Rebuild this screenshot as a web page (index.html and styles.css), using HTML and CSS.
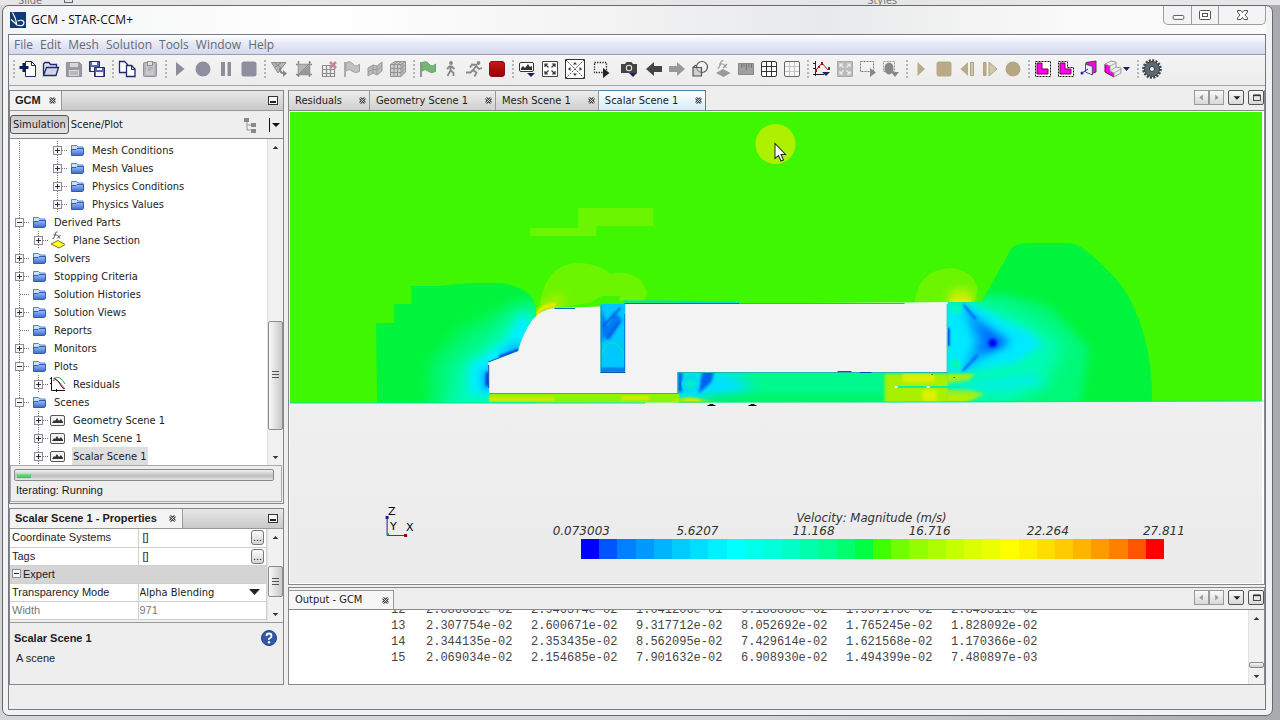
FILE: index.html
```html
<!DOCTYPE html>
<html lang="en">
<head>
<meta charset="utf-8">
<title>GCM - STAR-CCM+</title>
<link rel="stylesheet" href="styles.css">
</head>
<body>
<svg class="defs" aria-hidden="true">
  <defs>
    <linearGradient id="folderFill" x1="0" y1="0" x2="0" y2="1"><stop offset="0" stop-color="#9dbdf5"/><stop offset="1" stop-color="#3c68cf"/></linearGradient>
    <linearGradient id="stopFill" x1="0" y1="0" x2="0" y2="1"><stop offset="0" stop-color="#c81818"/><stop offset="1" stop-color="#960000"/></linearGradient>
    <symbol id="v" viewBox="0 0 19 18"><path d="M9.5 0V18" stroke="#777" stroke-dasharray="1 1"/></symbol>
    <symbol id="plus" viewBox="0 0 19 18"><path d="M9.5 0V18M14 9.5H19" stroke="#777" stroke-dasharray="1 1"/><rect x="5.500" y="5.500" width="8" height="8" fill="#f6f6f8" stroke="#8d8d93"/><path d="M7 9.500H12M9.500 7V12" stroke="#234"/></symbol>
    <symbol id="minus" viewBox="0 0 19 18"><path d="M9.500 0V18M14 9.500H19" stroke="#777" stroke-dasharray="1 1"/><rect x="5.500" y="5.500" width="8" height="8" fill="#f6f6f8" stroke="#8d8d93"/><path d="M7 9.500H12" stroke="#234"/></symbol>
    <symbol id="leaf" viewBox="0 0 19 18"><path d="M9.500 0V18M10 9.500H19" stroke="#777" stroke-dasharray="1 1"/></symbol>
    <symbol id="folder" viewBox="0 0 20 18"><path d="M4.500 13V4.500H9.500L11 6H16V13Z" fill="#cfe0ff" stroke="#4f7fd8"/><path d="M4.500 14.500V8.500H9L10 7.500H16.500V13.500L15.500 14.500Z" fill="url(#folderFill)" stroke="#3059bd"/></symbol>
    <symbol id="scene" viewBox="0 0 20 18"><rect x="2.500" y="4.500" width="14" height="10" rx="1.500" fill="#f4f4f4" stroke="#555"/><path d="M4 12L6 9 7 10 9 7 11 10 13 8 15 11V12Z" fill="#333"/></symbol>
    <symbol id="fx" viewBox="0 0 20 18"><path d="M4.500 7.500Q6 8 6.500 5.500L7.500 2Q8 .5 9.500 1M5.500 4H9M9.500 4L12 7.500M12.500 4L9 7.500" fill="none" stroke="#555"/><path d="M3 13L10 9.500 17 13.500 11 17Z" fill="#ffff20" stroke="#77731e"/></symbol>
    <symbol id="plot" viewBox="0 0 20 18"><path d="M3.500 2V15.500H17M2 3.500H4M2 8.500H4M8.500 14V17" fill="none" stroke="#111"/><path d="M5 4Q9 1 12 3T17 9" fill="none" stroke="#40a038"/><path d="M5 6Q7 3 10 6T17 14" fill="none" stroke="#c33"/><path d="M6 3Q10 5 12 9T16 14" fill="none" stroke="#326"/></symbol>
    <symbol id="close" viewBox="0 0 7 7"><path d="M1 1L6 6M6 1L1 6" stroke="#444" stroke-width="2.600"/><path d="M1 1L6 6M6 1L1 6" stroke="#eee" stroke-width=".8"/></symbol>
    <symbol id="min" viewBox="0 0 10 9"><rect x=".5" y=".5" width="9" height="8" fill="#f5f5f5" stroke="#333"/><path d="M2 6H8" stroke="#222" stroke-width="2"/></symbol>
    <symbol id="max" viewBox="0 0 15 15"><rect x="4" y="5" width="8" height="6" fill="none" stroke="#333"/><path d="M4 5H12" stroke="#333" stroke-width="2"/></symbol>
    <symbol id="left" viewBox="0 0 15 15"><path d="M9 4V11L5 7.500Z" fill="#999"/></symbol>
    <symbol id="right" viewBox="0 0 15 15"><path d="M6 4V11L10 7.500Z" fill="#999"/></symbol>
    <symbol id="down" viewBox="0 0 15 15"><path d="M4 6H12L8 10Z" fill="#222"/></symbol>
    <symbol id="sup" viewBox="0 0 16 16"><path d="M5 10H11L8 7Z" fill="#333"/></symbol>
    <symbol id="sdown" viewBox="0 0 16 16"><path d="M5 7H11L8 10Z" fill="#333"/></symbol>
  </defs>
</svg>

<div class="behind" aria-hidden="true"><span class="behind-slide">Slide</span><i class="behind-box"></i><span class="behind-styles">Styles</span></div>

<div class="window">
  <header class="titlebar">
    <svg class="app-icon" viewBox="0 0 16 16"><rect width="16" height="16" fill="#103b70"/><path d="M2.500 .5Q6 6 7 13.500M1 7.500Q4 10 7 13 14 15 14 10.500 13 7 7.500 9" fill="none" stroke="#fff" stroke-width="1.200"/></svg>
    <h1>GCM - STAR-CCM+</h1>
    <div class="caption">
      <button aria-label="Minimize"><svg width="27" height="18" viewBox="0 0 28 18"><rect x="9.500" y="9.500" width="11" height="4" rx="1" fill="#fff" stroke="#555"/></svg></button>
      <button aria-label="Maximize"><svg width="26" height="18" viewBox="0 0 26 18"><rect x="7.500" y="4.500" width="11" height="9" rx="1" fill="#fff" stroke="#555"/><rect x="10.500" y="7.500" width="5" height="3" fill="#fff" stroke="#555"/></svg></button>
      <button aria-label="Close"><svg width="46" height="18" viewBox="0 0 46 18"><path d="M18.500 4.500H22L23.500 6.500 25 4.500H28.500V6L26 9 28.500 12V13.500H25L23.500 11.500 22 13.500H18.500V12L21 9 18.500 6Z" fill="#fff" stroke="#555"/></svg></button>
    </div>
  </header>

  <div class="client">
    <nav class="menubar"><button>File</button><button>Edit</button><button>Mesh</button><button>Solution</button><button>Tools</button><button>Window</button><button>Help</button></nav>

    <div class="toolbar" role="toolbar">
      <i class="sep"></i>
      <button aria-label="New"><svg viewBox="0 0 20 20"><path d="M7.500 2.500H13.500L17.500 6.500V17.500H7.500Z" fill="#fff" stroke="#1d2a6b"/><path d="M13.500 2.500V6.500H17.500" fill="none" stroke="#1d2a6b"/><path d="M1.500 8.500H10.500M6 4V13" stroke="#101c55" stroke-width="3"/></svg></button>
      <button aria-label="Open"><svg viewBox="0 0 20 20"><path d="M2.500 15.500V5L4 3.500H8L9.500 5.500H15.500V8" fill="#d8dff2" stroke="#1d2a6b" stroke-width="1.300"/><path d="M2.500 16.500L5.500 8.500H17.500L15 16.500Z" fill="#cfd5e6" stroke="#1d2a6b" stroke-width="1.300"/></svg></button>
      <button aria-label="Save"><svg viewBox="0 0 20 20"><path d="M2.500 3.500H15.500L17.500 5.500V17.500H2.500Z" fill="#9b9ba1" stroke="#909097"/><path d="M6 4H14V8H6ZM5 11H15V17H5Z" fill="#d8d8dc"/><path d="M6 13H14M6 15H14" stroke="#999"/></svg></button>
      <button aria-label="Save all"><svg viewBox="0 0 20 20"><path d="M2.500 2.500H12.500V12.500H2.500Z" fill="#5967a4" stroke="#1d2a6b"/><path d="M5 3H10V6H5ZM4 8H11V12H4Z" fill="#f5f6fb"/><path d="M7.500 8.500H17.500V17.500H7.500Z" fill="#5967a4" stroke="#1d2a6b"/><path d="M10 9H15V11H10ZM9 13H16V17H9Z" fill="#f5f6fb"/></svg></button>
      <i class="sep"></i>
      <button aria-label="Copy"><svg viewBox="0 0 20 20"><path d="M2.500 2.500H7.500L10.500 5.500V13.500H2.500Z" fill="#fff" stroke="#1d2a6b" stroke-width="1.300"/><path d="M9.500 6.500H14.500L18 10V17.500H9.500Z" fill="#fff" stroke="#1d2a6b" stroke-width="1.300"/><path d="M14.500 6.500V10.500H18" fill="none" stroke="#1d2a6b"/></svg></button>
      <button aria-label="Paste"><svg viewBox="0 0 20 20"><rect x="3.500" y="3.500" width="13" height="14" rx="1" fill="#b5b5b8" stroke="#919194"/><path d="M6 5H14V16H6Z" fill="#c9c9cc"/><rect x="7.500" y="2.500" width="5" height="4" fill="#ddd" stroke="#919194"/><path d="M8 9H13M8 11H11" stroke="#999"/></svg></button>
      <i class="sep"></i>
      <button aria-label="Play"><svg viewBox="0 0 20 20"><path d="M6 3L14.500 10 6 17Z" fill="#8c8c9c"/></svg></button>
      <button aria-label="Record"><svg viewBox="0 0 20 20"><circle cx="10" cy="10" r="7.500" fill="#8e8e9f"/></svg></button>
      <button aria-label="Pause"><svg viewBox="0 0 20 20"><path d="M5 3H9V17H5ZM11.500 3H15V17H11.500Z" fill="#8e8e98"/></svg></button>
      <button aria-label="Stop macro"><svg viewBox="0 0 20 20"><rect x="2.500" y="2.500" width="15" height="15" rx="2.500" fill="#8e8e9f"/></svg></button>
      <i class="sep"></i>
      <button aria-label="Initialize"><svg viewBox="0 0 20 20"><path d="M2.500 3.500H17L9 14Z" fill="#b5b5b5" stroke="#8c8c8c"/><path d="M6 8L12 4M6 4L12 9" stroke="#888"/><path d="M11 9Q11 14 14 14" stroke="#888" stroke-width="2" fill="none"/><path d="M14 11L18 14.500 14 18Z" fill="#888"/></svg></button>
      <button class="wide" aria-label="Surface mesh"><svg viewBox="0 0 20 20"><path d="M2 5.500H18M2 15.500H18M4.500 2V18M15.500 2V18" stroke="#8b8b8b" stroke-width="1.500"/><path d="M4.500 15.500L15.500 5.500V15.500Z" fill="#999"/><path d="M4.500 5.500H15.500L4.500 15.500Z" fill="#b4b4b4"/><path d="M3 17L17 3" stroke="#888"/></svg></button>
      <button aria-label="Clear mesh"><svg viewBox="0 0 20 20"><path d="M3.500 6.500H15.500V17.500H3.500ZM7.500 6.500V17.500M11.500 6.500V17.500M3.500 10.500H15.500M3.500 14.500H15.500" fill="none" stroke="#8d8d8d" stroke-width="1.200"/><path d="M11 3L17 9M17 3L11 9" stroke="#c08b91" stroke-width="2.500"/></svg></button>
      <button aria-label="Surface"><svg viewBox="0 0 20 20"><path d="M3 3V18" stroke="#949494" stroke-width="1.500"/><path d="M4 4Q8 1 11 5T17.500 5V12.500Q13 15 10 12T4 12Z" fill="#c1c1c1" stroke="#a0a0a0"/></svg></button>
      <button aria-label="Volume surface"><svg viewBox="0 0 20 20"><path d="M3 9L8 6 12 7 17 3V12L12 16 8 14 3 17Z" fill="#bbb" stroke="#999"/><path d="M8 6V14M12 7V16M3 13L8 10 12 11 17 7" stroke="#999" fill="none"/></svg></button>
      <button aria-label="Volume mesh"><svg viewBox="0 0 20 20"><path d="M2.500 5.500L7 2.500H17.500V13L13 17.500H2.500Z" fill="#ccc" stroke="#929292"/><path d="M2.500 5.500H13V17.500M13 5.500L17.500 2.500M6 5V17M9.500 5V17M2.500 9.500H13L17 6M2.500 13.500H13L17 9.500M15 4V15M6 5L10 2.500M9.500 5L14 2.500" stroke="#929292" fill="none"/></svg></button>
      <i class="sep"></i>
      <button aria-label="Start"><svg viewBox="0 0 20 20"><path d="M3 3V18" stroke="#777" stroke-width="1.500"/><path d="M4 4Q8 1 11 5T17.500 5V12.500Q13 15 10 12T4 12Z" fill="#74b874" stroke="#67a367"/></svg></button>
      <button aria-label="Step"><svg viewBox="0 0 20 20"><circle cx="10" cy="4" r="1.900" fill="#888"/><path d="M9.500 6.500V11.500L6.500 17M9.500 11L12.500 14V17M9 7L6 10M10 7L13.500 10" fill="none" stroke="#888" stroke-width="1.800"/></svg></button>
      <button aria-label="Run"><svg viewBox="0 0 20 20"><circle cx="14.500" cy="4" r="1.900" fill="#888"/><path d="M13 6L9 11 12.500 13.500 10.500 17.500M9 11L6.500 13.500H2M13 6L8 5.500 6 8.500M12.500 7.500L15 10 18 9" fill="none" stroke="#888" stroke-width="1.800"/></svg></button>
      <button aria-label="Stop"><svg viewBox="0 0 20 20"><rect x="2.500" y="2.500" width="15" height="15" rx="2.500" fill="url(#stopFill)" stroke="#8c1111"/></svg></button>
      <i class="sep"></i>
      <button aria-label="Create scene"><svg viewBox="0 0 20 20"><rect x="2.500" y="3.500" width="14" height="9" rx="1.500" fill="#fff" stroke="#333"/><path d="M4 11V9L6 7 8 9 11 5 13 8 15 7V11Z" fill="#333"/><path d="M10 14H18L14 18Z" fill="#17255f"/></svg></button>
      <button aria-label="Reset view"><svg viewBox="0 0 20 20"><path d="M2.500 2.500H17.500V17.500H2.500Z" fill="#fff" stroke="#444"/><path d="M5 8V5H8M12 5H15V8M15 12V15H12M8 15H5V12M5 5L8.500 8.500M15 5L11.500 8.500M5 15L8.500 11.500M15 15L11.500 11.500" fill="none" stroke="#333" stroke-width="1.200"/></svg></button>
      <button class="wide" aria-label="View directions"><svg viewBox="0 0 20 20"><path d="M.5 .5H19.500V19.500H.5Z" fill="#fff" stroke="#333"/><path d="M1 1L19 19M19 1L1 19" stroke="#555" stroke-dasharray="2 1"/><path d="M10 3L12 5.500H8ZM10 17L12 14.500H8ZM3 10L5.500 8V12ZM17 10L14.500 8V12Z" fill="#333"/></svg></button>
      <button class="wide" aria-label="Select"><svg viewBox="0 0 20 20"><path d="M2.500 3.500H14.500V13.500H2.500Z" fill="none" stroke="#222" stroke-width="1.300" stroke-dasharray="1.300 1.300"/><path d="M11 9L17.500 14 11 19Z" fill="#222"/></svg></button>
      <button class="wide" aria-label="Snapshot"><svg viewBox="0 0 20 20"><path d="M2 5H6L7.500 3H12.500L14 5H18V14H2Z" fill="#444"/><circle cx="10" cy="9" r="3.200" fill="#eee"/><circle cx="10" cy="9" r="2.200" fill="#444"/><path d="M10 14H18L14 18Z" fill="#17255f"/></svg></button>
      <button aria-label="Back"><svg viewBox="0 0 20 20"><path d="M2 10L10 3V7H18V13H10V17Z" fill="#444"/></svg></button>
      <button aria-label="Forward"><svg viewBox="0 0 20 20"><path d="M18 10L10 3V7H2V13H10V17Z" fill="#999"/></svg></button>
      <button aria-label="Parts"><svg viewBox="0 0 20 20"><circle cx="12" cy="8" r="5.500" fill="none" stroke="#555" stroke-width="1.200"/><path d="M3 8.500H11.500V17H3ZM3 8.500L6 6" fill="#bbb" fill-opacity=".6" stroke="#555" stroke-width="1.200"/></svg></button>
      <button aria-label="Function"><svg viewBox="0 0 20 20"><path d="M4.500 9Q6 9.500 7 6L8 3Q9 1 10.500 2M6 5H10M10.500 5L13.500 9M14 5L10 9" fill="none" stroke="#999" stroke-width="1.200"/><path d="M3 14L10 10 17.500 14 10.500 18Z" fill="#999"/></svg></button>
      <button aria-label="Measure"><svg viewBox="0 0 20 20"><path d="M2.500 4.500H17.500V15.500H2.500Z" fill="#a0a0a0" stroke="#888"/><path d="M5.500 5V9M8 5V8M10.500 5V11M13 5V8M15.500 5V9" stroke="#777"/></svg></button>
      <button aria-label="Mesh display"><svg viewBox="0 0 20 20"><rect x="2.500" y="2.500" width="15" height="15" rx="1.500" fill="#fff" stroke="#333"/><path d="M7.500 2V18M12.500 2V18M2 7.500H18M2 12.500H18" stroke="#333"/></svg></button>
      <button aria-label="Hide mesh"><svg viewBox="0 0 20 20"><rect x="2.500" y="2.500" width="15" height="15" rx="1.500" fill="#f8f8f8" stroke="#666"/><path d="M7.500 3V17M12.500 3V17M3 7.500H17M3 12.500H17" stroke="#c5c5c5"/></svg></button>
      <i class="sep"></i>
      <button aria-label="Create plot"><svg viewBox="0 0 20 20"><path d="M3.500 2V17M1 15.500H12M1 4.500H4M1 9.500H4" stroke="#222"/><path d="M4 11L10 4 16 11 18 9" stroke="#a22" fill="none"/><path d="M3 10H5V13H3ZM9 3H11V6H9ZM6 7H8V9H6ZM16 8H18V11H16Z" fill="#a11"/><path d="M10 13H18L14 17Z" fill="#17255f"/></svg></button>
      <button aria-label="Fit plot"><svg viewBox="0 0 20 20"><path d="M2.500 2.500H17.500V17.500H2.500Z" fill="#bbb" stroke="#aaa"/><path d="M5 8V5H8M12 5H15V8M15 12V15H12M8 15H5V12M5 5L8.500 8.500M15 5L11.500 8.500M5 15L8.500 11.500M15 15L11.500 11.500" fill="none" stroke="#eee" stroke-width="1.200"/></svg></button>
      <button aria-label="Zoom plot"><svg viewBox="0 0 20 20"><path d="M2.500 2.500H15.500V12.500H2.500Z" fill="none" stroke="#777" stroke-dasharray="2 1"/><path d="M12 9L18 13.500 12 18Z" fill="#888"/></svg></button>
      <button aria-label="Plot data"><svg viewBox="0 0 20 20"><path d="M2.500 2.500H13.500V12.500H2.500Z" fill="none" stroke="#999" stroke-dasharray="2 1"/><ellipse cx="8" cy="9.500" rx="4.500" ry="6" fill="#888"/><path d="M10 13H18L14 18Z" fill="#888"/></svg></button>
      <i class="sep"></i>
      <button aria-label="Play history"><svg viewBox="0 0 20 20"><path d="M6.500 3L14 10 6.500 17Z" fill="#b9ab87"/></svg></button>
      <button aria-label="Stop history"><svg viewBox="0 0 20 20"><rect x="2.500" y="2.500" width="15" height="15" rx="2.500" fill="#b9ab87"/></svg></button>
      <button aria-label="Previous"><svg viewBox="0 0 20 20"><path d="M11 3L3.500 10 11 17Z" fill="#b9ab87"/><path d="M13.500 3.500H16.500V16.500H13.500Z" fill="#d0c6aa" stroke="#b0a37f"/></svg></button>
      <button aria-label="Next"><svg viewBox="0 0 20 20"><path d="M9 3L17 10 9 17Z" fill="#d0c6aa" stroke="#b0a37f"/><path d="M3.500 3.500H6V16.500H3.500Z" fill="#b9ab87" stroke="#b0a37f"/></svg></button>
      <button aria-label="Record history"><svg viewBox="0 0 20 20"><circle cx="10" cy="10" r="7.500" fill="#b5a780"/></svg></button>
      <i class="sep"></i>
      <button aria-label="Section"><svg viewBox="0 0 20 20"><path d="M2.500 2.500H17.500V17.500H2.500Z" fill="#fff" stroke="#111" stroke-dasharray="2 1"/><path d="M4 4H9V10H15V15H4Z" fill="#f0e" stroke="#704"/></svg></button>
      <button aria-label="Clip"><svg viewBox="0 0 20 20"><path d="M2.500 2.500H11.500V8.500H17.500V17.500H2.500Z" fill="#fff" stroke="#111" stroke-dasharray="2 1"/><path d="M4 4H9V10H15V15H4Z" fill="#f0e" stroke="#704"/></svg></button>
      <button aria-label="Plane"><svg viewBox="0 0 20 20"><path d="M7 3.500L17 2V13L13 14.500V7L7 5.500Z" fill="#f0e" stroke="#535"/><path d="M6.500 5L13.500 7.500V16L6.500 13Z" fill="#eee" fill-opacity=".8" stroke="#557"/><path d="M3 14L9 10" stroke="#22c"/><circle cx="3" cy="14" r="1.500" fill="#22c"/></svg></button>
      <button class="drop" aria-label="Threshold"><svg class="icon-wide" viewBox="0 0 28 20"><path d="M2 5L7 7V12L11 14V18L2 13Z" fill="#f0e" stroke="#704"/><path d="M2 5L8 2 13 3V8L18 9V14L11 18V14L7 12V7Z" fill="#eee" stroke="#999"/><path d="M7 7L13 4M11 14L18 10M7 12L13 8" stroke="#aaa"/><path d="M20 8H27L23.500 12Z" fill="#17255f"/></svg></button>
      <i class="sep"></i>
      <button aria-label="Settings"><svg viewBox="0 0 20 20"><circle cx="10" cy="10" r="8.500" fill="none" stroke="#3d444b" stroke-width="2.600" stroke-dasharray="2 1.330"/><circle cx="10" cy="10" r="7.500" fill="#5d6973" stroke="#3d444b"/><circle cx="10" cy="10" r="2.500" fill="#f4f4f4" stroke="#333"/></svg></button>
    </div>

    <main class="workspace">
      <aside class="side">
        <section class="panel explorer">
          <div class="panel-head"><div class="panel-title">GCM <button aria-label="Close GCM"><svg class="x"><use href="#close"/></svg></button></div><button class="mini" aria-label="Minimize"><svg width="10" height="9"><use href="#min"/></svg></button></div>
          <div class="modes">
            <button class="mode on">Simulation</button><button class="mode">Scene/Plot</button>
            <svg class="tree-icon" viewBox="0 0 24 16" width="24" height="16"><path d="M4 4V13H11M4 8H11" fill="none" stroke="#999"/><path d="M1 1H6V5H1ZM8 6H13V10H8ZM8 12H13V16H8Z" fill="#888"/></svg>
            <button class="filter" aria-label="Filter"><svg width="14" height="16" viewBox="0 0 14 16"><path d="M2.500 1V15" stroke="#111"/><path d="M5 6H13L9 10Z" fill="#111"/></svg></button>
          </div>
          <div class="scroller">
            <ul class="tree">
              <li><svg class="g"><use href="#v"/></svg><i class="g"></i><svg class="g"><use href="#plus"/></svg><svg class="ic"><use href="#folder"/></svg><span>Mesh Conditions</span></li>
              <li><svg class="g"><use href="#v"/></svg><i class="g"></i><svg class="g"><use href="#plus"/></svg><svg class="ic"><use href="#folder"/></svg><span>Mesh Values</span></li>
              <li><svg class="g"><use href="#v"/></svg><i class="g"></i><svg class="g"><use href="#plus"/></svg><svg class="ic"><use href="#folder"/></svg><span>Physics Conditions</span></li>
              <li><svg class="g"><use href="#v"/></svg><i class="g"></i><svg class="g"><use href="#plus"/></svg><svg class="ic"><use href="#folder"/></svg><span>Physics Values</span></li>
              <li><svg class="g"><use href="#minus"/></svg><svg class="ic"><use href="#folder"/></svg><span>Derived Parts</span></li>
              <li><svg class="g"><use href="#v"/></svg><svg class="g"><use href="#plus"/></svg><svg class="ic"><use href="#fx"/></svg><span>Plane Section</span></li>
              <li><svg class="g"><use href="#plus"/></svg><svg class="ic"><use href="#folder"/></svg><span>Solvers</span></li>
              <li><svg class="g"><use href="#plus"/></svg><svg class="ic"><use href="#folder"/></svg><span>Stopping Criteria</span></li>
              <li><svg class="g"><use href="#leaf"/></svg><svg class="ic"><use href="#folder"/></svg><span>Solution Histories</span></li>
              <li><svg class="g"><use href="#plus"/></svg><svg class="ic"><use href="#folder"/></svg><span>Solution Views</span></li>
              <li><svg class="g"><use href="#leaf"/></svg><svg class="ic"><use href="#folder"/></svg><span>Reports</span></li>
              <li><svg class="g"><use href="#plus"/></svg><svg class="ic"><use href="#folder"/></svg><span>Monitors</span></li>
              <li><svg class="g"><use href="#minus"/></svg><svg class="ic"><use href="#folder"/></svg><span>Plots</span></li>
              <li><svg class="g"><use href="#v"/></svg><svg class="g"><use href="#plus"/></svg><svg class="ic"><use href="#plot"/></svg><span>Residuals</span></li>
              <li><svg class="g"><use href="#minus"/></svg><svg class="ic"><use href="#folder"/></svg><span>Scenes</span></li>
              <li><svg class="g"><use href="#v"/></svg><svg class="g"><use href="#plus"/></svg><svg class="ic"><use href="#scene"/></svg><span>Geometry Scene 1</span></li>
              <li><svg class="g"><use href="#v"/></svg><svg class="g"><use href="#plus"/></svg><svg class="ic"><use href="#scene"/></svg><span>Mesh Scene 1</span></li>
              <li><svg class="g"><use href="#v"/></svg><svg class="g"><use href="#plus"/></svg><svg class="ic"><use href="#scene"/></svg><span class="selected">Scalar Scene 1</span></li>
            </ul>
            <div class="bar"><svg class="arrow"><use href="#sup"/></svg><i class="gap-tree"></i><b class="thumb thumb-tree"></b><i class="gap-end"></i><svg class="arrow"><use href="#sdown"/></svg></div>
          </div>
          <div class="progress"><div class="track"><i></i></div><p>Iterating: Running</p></div>
        </section>

        <section class="panel props">
          <div class="panel-head"><div class="panel-title">Scalar Scene 1 - Properties <button aria-label="Close properties"><svg class="x"><use href="#close"/></svg></button></div><button class="mini" aria-label="Minimize"><svg width="10" height="9"><use href="#min"/></svg></button></div>
          <div class="scroller">
            <table class="grid">
              <tr><th>Coordinate Systems</th><td><div class="cell">[]<button class="dots" aria-label="Edit coordinate systems">...</button></div></td></tr>
              <tr><th>Tags</th><td><div class="cell">[]<button class="dots" aria-label="Edit tags">...</button></div></td></tr>
              <tr class="group"><th colspan="2"><svg width="9" height="9" viewBox="0 0 9 9"><rect x=".5" y=".5" width="8" height="8" fill="#f6f6f8" stroke="#8d8d93"/><path d="M2 4.500H7" stroke="#234"/></svg>Expert</th></tr>
              <tr><th><label for="mode">Transparency Mode</label></th><td><div class="pick"><select id="mode"><option>Alpha Blending</option></select><svg width="11" height="6" viewBox="0 0 11 6"><path d="M0 0H11L5.500 6Z" fill="#222"/></svg></div></td></tr>
              <tr class="off"><th>Width</th><td>971</td></tr>
            </table>
            <div class="bar"><svg class="arrow"><use href="#sup"/></svg><i class="gap-props"></i><b class="thumb thumb-props"></b><i class="gap-end-props"></i><svg class="arrow"><use href="#sdown"/></svg></div>
          </div>
          <div class="about"><h2>Scalar Scene 1</h2><button aria-label="Help"><svg width="16" height="16" viewBox="0 0 16 16"><circle cx="8" cy="8" r="7.500" fill="#3258a8" stroke="#234180"/><path d="M5.500 6Q5.500 3.500 8 3.500T10.500 6Q10.500 7.300 9 8T8 9.800" fill="none" stroke="#fff" stroke-width="1.800"/><circle cx="8" cy="12.300" r="1.200" fill="#fff"/></svg></button><p>A scene</p></div>
        </section>
      </aside>

      <div class="center">
        <section class="views">
          <div class="tabs">
            <button class="tab">Residuals<svg class="x"><use href="#close"/></svg></button>
            <button class="tab">Geometry Scene 1<svg class="x"><use href="#close"/></svg></button>
            <button class="tab">Mesh Scene 1<svg class="x"><use href="#close"/></svg></button>
            <button class="tab active">Scalar Scene 1<svg class="x"><use href="#close"/></svg></button>
            <div class="tab-tools"><button aria-label="Previous tab"><svg><use href="#left"/></svg></button><button aria-label="Next tab"><svg><use href="#right"/></svg></button><button class="strong" aria-label="Tab list"><svg><use href="#down"/></svg></button><button class="strong" aria-label="Maximize"><svg><use href="#max"/></svg></button></div>
          </div>
          <div class="canvas">
            <svg class="scene" viewBox="291 112 971 471" preserveAspectRatio="none" role="img" aria-label="Velocity magnitude around the truck">
              <defs>
                <linearGradient id="bg" x1="0" y1="0" x2="0" y2="1"><stop offset="0" stop-color="#f6f6f6"/><stop offset="1" stop-color="#ebebeb"/></linearGradient>
                <filter id="b1" x="-50%" y="-50%" width="200%" height="200%" filterUnits="objectBoundingBox"><feGaussianBlur stdDeviation="1.500"/></filter>
                <filter id="line" filterUnits="userSpaceOnUse" x="291" y="112" width="971" height="471"><feGaussianBlur stdDeviation="1.200"/></filter>
                <filter id="b4" x="-50%" y="-50%" width="200%" height="200%"><feGaussianBlur stdDeviation="4"/></filter>
                <filter id="b8" x="-50%" y="-50%" width="200%" height="200%"><feGaussianBlur stdDeviation="8"/></filter>
                <clipPath id="flow"><path d="M291 112H1262V401L925 402 291 403Z"/></clipPath>
                <clipPath id="front"><path d="M378 403L377 323H395V304H412V286H440L470 283H500Q525 286 533 298L537 310V403Z"/></clipPath>
                <clipPath id="wake"><path d="M940 302H982L1012 248Q1018 243 1030 243H1070Q1082 245 1097 260Q1125 284 1135 310Q1153 350 1152 403H880V372H940Z"/></clipPath>
                <clipPath id="notch"><path d="M601 304H626V372H601Z"/></clipPath>
                <clipPath id="under"><path d="M678 372H948V402H678Z"/></clipPath>
              </defs>
              <rect x="291" y="112" width="971" height="471" fill="url(#bg)"/>
              <g clip-path="url(#flow)">
                <rect x="291" y="112" width="971" height="292" fill="#3ff700"/>
                <path d="M579 208H654V226H597V236H531V228H579Z" fill="#6cf500"/>
                <path d="M541 310Q540 290 552 275Q562 263 580 263Q600 264 611 274Q630 270 641 280L648 292 645 301H620V296H603L590 303Z" fill="#6cf500"/>
                <path d="M540 312Q546 290 568 297L560 308Z" fill="#a4f000" filter="url(#b4)"/>
                <path d="M535 320Q540 305 556 305" fill="none" stroke="#f0e800" stroke-width="4" filter="url(#line)"/>
                <path d="M915 303Q919 270 950 268Q975 270 978 290L974 303Z" fill="#6cf500"/>
                <ellipse cx="961" cy="298" rx="13" ry="9" fill="#c8f000" filter="url(#b4)"/>
                <path d="M950 301H971" stroke="#ffe400" stroke-width="3" filter="url(#line)"/>
                <g clip-path="url(#front)">
                  <rect x="370" y="275" width="180" height="130" fill="#00f43c"/>
                  <path d="M432 415V362L465 330 515 305 545 300V410Z" fill="#00f878" filter="url(#b8)"/>
                  <path d="M445 415L460 362 485 345 515 312 540 306V410Z" fill="#00fbb5" filter="url(#b8)"/>
                  <path d="M470 395V365L507 341 523 312 535 330 510 362V395Z" fill="#00f0ff" filter="url(#b4)"/>
                  <path d="M484 370V390H492V370ZM498 357L521 350 520 342Z" fill="#0090ff" filter="url(#b4)"/>
                  <path d="M488 372V386M500 357L520 350" stroke="#0030dd" stroke-width="3" filter="url(#line)"/>
                </g>
                <g clip-path="url(#wake)">
                  <rect x="870" y="235" width="290" height="170" fill="#00f43c"/>
                  <path d="M940 300L1005 294 1050 307 1089 348 1080 405H940Z" fill="#00f878" filter="url(#b4)"/>
                  <path d="M945 304H975Q1020 305 1065 345L1045 385 1010 405H945Z" fill="#00fbb5" filter="url(#b8)"/>
                  <path d="M945 304H972L1030 333 1043 345 1015 363 960 373H945Z" fill="#00e8ff" filter="url(#b4)"/>
                  <path d="M962 304L984 322 1012 342 988 354 963 371 976 342Z" fill="#00a0ff" filter="url(#b4)"/>
                  <path d="M975 322L998 338 1007 343 990 351 978 349 988 342Z" fill="#0058ff" filter="url(#b4)"/>
                  <circle cx="993" cy="343" r="4" fill="#0000ee" filter="url(#b1)"/>
                  <path d="M964 305L976 319M963 371L978 355" stroke="#0058ff" stroke-width="2" filter="url(#line)"/>
                  <path d="M948 328V346" stroke="#0040ee" stroke-width="4" filter="url(#line)"/>
                  <ellipse cx="957" cy="309" rx="5" ry="5" fill="#00fbb5" filter="url(#b1)"/>
                  <ellipse cx="956" cy="364" rx="5" ry="5" fill="#00fbb5" filter="url(#b1)"/>
                  <path d="M940 374H975L969 381 948 384H930ZM930 389H970L985 394 965 403H930Z" fill="#b4f000" filter="url(#b1)"/>
                  <path d="M930 385L975 382 1030 374 1050 384 1000 391 930 388Z" fill="#00f0e0" filter="url(#b4)"/>
                </g>
                <g clip-path="url(#notch)">
                  <rect x="601" y="304" width="25" height="68" fill="#00c8ff"/>
                  <path d="M602 309L609 328 602 344ZM615 312L623 320 610 340 604 335Z" fill="#0078f4" filter="url(#b1)"/>
                  <path d="M603 327L621 308M607 339L620 322M602 369H626" stroke="#0058df" stroke-width="2" filter="url(#line)"/>
                  <path d="M603 354Q606 341 615 343 625 347 624 359" fill="none" stroke="#00e8b0"/>
                  <path d="M601.500 306V371H625.500V314" fill="none" stroke="#0068cc"/>
                </g>
                <g clip-path="url(#under)">
                  <rect x="678" y="372" width="270" height="31" fill="#00f88c"/>
                  <path d="M672 370H730L755 387 720 405H672Z" fill="#00e0ff" filter="url(#b8)"/>
                  <path d="M703 370H715L712 382 699 394ZM678 372H683V392H678Z" fill="#0060f0" filter="url(#b1)"/>
                  <circle cx="691" cy="384" r="9" fill="#00d8f4"/>
                  <circle cx="691" cy="384" r="5" fill="#00edc8" filter="url(#b1)"/>
                  <path d="M690 404L715 395H885V405Z" fill="#00f45c" filter="url(#b4)"/>
                  <path d="M885 374H950V404H885Z" fill="#a8f000" filter="url(#b1)"/>
                  <path d="M903 374H935V382H903ZM923 390H937V401H923Z" fill="#e0f000" filter="url(#b1)"/>
                </g>
                <path d="M895 387H960" stroke="#00f0b0" stroke-width="2"/><path d="M895 387H898M927 387H930" stroke="#fff" stroke-width="2"/>
                <path d="M490 398H680" stroke="#8cf400" stroke-width="8"/>
                <path d="M672 400L690 397 718 403H672Z" fill="#a8f000" filter="url(#b1)"/>
                <path d="M490 399H555M622 398H650M684 401H700" stroke="#d8e800" stroke-width="4" filter="url(#line)"/>
                <path d="M624 301.500H665L740 303" stroke="#00dcd0" stroke-width="2" fill="none"/>
              </g>
              <path d="M489 362L519 350.500Q523 335 533 320Q543 309 555 308L601 306.500V372H626V304L740 303.500 905 302.500 948 302V372H678V394H490Z" fill="#f3f3f4"/>
              <path d="M489 362L519 350.500M625 303.500H740M555 308.500H576" fill="none" stroke="#0070c0"/>
              <path d="M740 303.500H905M678.500 372V394M490 393.500H678M678 372.500H948M947.500 304V372" fill="none" stroke="#20b7b0"/>
              <path d="M601 372.500H626M838 371.500H852M860 372.500H872M489.500 365V388" stroke="#104fb0"/>
              <path d="M291 403H646M680 402H940L1262 401" stroke="#00e6a0" fill="none"/>
              <path d="M708 405.500H716M710 404.500H714M749 405.500H757M751 404.500H755" stroke="#111"/>
              <path d="M932 374.500H933M954 377.500H955" stroke="#123"/>
              <path d="M388 535.500V517" stroke="#1919a0"/><path d="M388 535.500H407" stroke="#b01818"/><path d="M386.500 516H389.500V519H386.500Z" fill="#1919a0"/><path d="M405 534H408V537H405Z" fill="#900"/><path d="M388 533H390V535H388Z" fill="#0c0"/>
              <g class="axis"><text x="389" y="515">Z</text><text x="391" y="530">Y</text><text x="407" y="531">X</text></g>
              <text class="legend-title" x="872" y="522">Velocity: Magnitude (m/s)</text>
              <g class="legend"><text x="582" y="535">0.073003</text><text x="698" y="535">5.6207</text><text x="814" y="535">11.168</text><text x="930" y="535">16.716</text><text x="1048" y="535">22.264</text><text x="1164" y="535">27.811</text></g>
              <g shape-rendering="crispEdges">
                <rect x="582" y="539" width="18" height="20" fill="#0000ff"/><rect x="600" y="539" width="18" height="20" fill="#0055ff"/><rect x="618" y="539" width="19" height="20" fill="#007fff"/><rect x="637" y="539" width="18" height="20" fill="#009aff"/><rect x="655" y="539" width="18" height="20" fill="#00b4ff"/><rect x="673" y="539" width="18" height="20" fill="#00caff"/><rect x="691" y="539" width="18" height="20" fill="#00deff"/><rect x="709" y="539" width="19" height="20" fill="#00f0ff"/><rect x="728" y="539" width="18" height="20" fill="#00ffff"/><rect x="746" y="539" width="18" height="20" fill="#00ffec"/><rect x="764" y="539" width="18" height="20" fill="#00ffda"/><rect x="782" y="539" width="18" height="20" fill="#00ffc6"/><rect x="800" y="539" width="18" height="20" fill="#00ffac"/><rect x="818" y="539" width="19" height="20" fill="#00ff92"/><rect x="837" y="539" width="18" height="20" fill="#00ff6e"/><rect x="855" y="539" width="18" height="20" fill="#00ff40"/><rect x="873" y="539" width="18" height="20" fill="#40ff00"/><rect x="891" y="539" width="18" height="20" fill="#70ff00"/><rect x="909" y="539" width="19" height="20" fill="#92ff00"/><rect x="928" y="539" width="18" height="20" fill="#acff00"/><rect x="946" y="539" width="18" height="20" fill="#c6ff00"/><rect x="964" y="539" width="18" height="20" fill="#daff00"/><rect x="982" y="539" width="18" height="20" fill="#ecff00"/><rect x="1000" y="539" width="19" height="20" fill="#ffff00"/><rect x="1019" y="539" width="18" height="20" fill="#fff000"/><rect x="1037" y="539" width="18" height="20" fill="#ffde00"/><rect x="1055" y="539" width="18" height="20" fill="#ffca00"/><rect x="1073" y="539" width="18" height="20" fill="#ffb400"/><rect x="1091" y="539" width="18" height="20" fill="#ff9a00"/><rect x="1109" y="539" width="19" height="20" fill="#ff7f00"/><rect x="1128" y="539" width="18" height="20" fill="#ff5500"/><rect x="1146" y="539" width="18" height="20" fill="#ff0000"/>
              </g>
              <circle cx="776" cy="144" r="20" fill="#aef000"/>
              <path d="M775.500 143.500V158.500L779 155.500 781.500 161 784 160 781.500 154.500H786Z" fill="#fff" stroke="#222"/>
            </svg>
          </div>
        </section>

        <section class="output">
          <div class="tabs out-tabs">
            <button class="tab plain">Output - GCM<svg class="x"><use href="#close"/></svg></button>
            <div class="tab-tools"><button aria-label="Previous tab"><svg><use href="#left"/></svg></button><button aria-label="Next tab"><svg><use href="#right"/></svg></button><button class="strong" aria-label="Tab list"><svg><use href="#down"/></svg></button><button class="strong" aria-label="Maximize"><svg><use href="#max"/></svg></button></div>
          </div>
          <div class="scroller">
            <div class="log"><table>
              <tr><td>12</td><td>2.886681e-02</td><td>2.946374e-02</td><td>1.041206e-01</td><td>9.188888e-02</td><td>1.937173e-02</td><td>2.845311e-02</td></tr>
              <tr><td>13</td><td>2.307754e-02</td><td>2.600671e-02</td><td>9.317712e-02</td><td>8.052692e-02</td><td>1.765245e-02</td><td>1.828092e-02</td></tr>
              <tr><td>14</td><td>2.344135e-02</td><td>2.353435e-02</td><td>8.562095e-02</td><td>7.429614e-02</td><td>1.621568e-02</td><td>1.170366e-02</td></tr>
              <tr><td>15</td><td>2.069034e-02</td><td>2.154685e-02</td><td>7.901632e-02</td><td>6.908930e-02</td><td>1.494399e-02</td><td>7.480897e-03</td></tr>
            </table></div>
            <div class="bar"><svg class="arrow"><use href="#sup"/></svg><i class="gap-log"></i><b class="thumb thumb-log"></b><svg class="arrow"><use href="#sdown"/></svg></div>
          </div>
        </section>
      </div>
    </main>
    <footer class="status"></footer>
  </div>
</div>
</body>
</html>
```

FILE: styles.css
```css
* { box-sizing: border-box; }

body {
  margin: 0;
  height: 100vh;
  overflow: hidden;
  display: flex;
  flex-direction: column;
  padding: 0 7px 4px 2px;
  background: linear-gradient(90deg, #d5d5d6 0 60%, #a9aaae 100%);
  font: 11px/18px "DejaVu Sans Condensed", "DejaVu Sans", sans-serif;
  color: #1c1c1c;
}

button { font: inherit; color: inherit; background: none; border: 0; padding: 0; margin: 0; display: flex; align-items: center; justify-content: center; }
ul, p, h1, h2 { margin: 0; padding: 0; }
svg { display: block; flex: none; }
.defs { position: absolute; width: 0; height: 0; }

.behind { flex: none; height: 5px; margin: 0 -7px 0 -2px; overflow: hidden; display: flex; background: #e6e6e7; color: #777; }
.behind span { line-height: 2px; }
.behind-slide { margin-left: 18px; }
.behind-box { width: 9px; height: 3px; margin-left: 22px; border: 1px solid #667; border-top: 0; }
.behind-styles { margin-left: 794px; }

.window {
  flex: 1;
  min-height: 0;
  display: flex;
  flex-direction: column;
  padding: 0 6px 5px 5px;
  border: 1px solid #666a70;
  border-radius: 7px;
  background: #f1f2f3;
}

.titlebar { flex: none; height: 28px; display: flex; align-items: center; gap: 5px; padding-left: 2px; background: linear-gradient(90deg, #f3f4f5 0, #fff 25%, #f4f4f5 45%, #e8e9ea 65%, #fafafa 85%); }
.app-icon { width: 16px; height: 16px; }
.titlebar h1 { flex: 1; font: 12px/28px "Open Sans", "Noto Sans", sans-serif; color: #111; }
.caption { align-self: flex-start; display: flex; border: 1px solid #9a9da2; border-top: 0; border-radius: 0 0 5px 5px; background: #f3f3f5; }
.caption button + button { border-left: 1px solid #9a9da2; }

.client { flex: 1; min-height: 0; display: flex; flex-direction: column; border: 1px solid #777b80; background: #eee; }
.menubar { flex: none; height: 20px; display: flex; gap: 7px; padding-left: 5px; background: linear-gradient(#fff, #e6e9f5 45%, #d4d9ee); border-bottom: 1px solid #9a9ca6; font: 12px/20px "Open Sans", "Noto Sans", sans-serif; color: #666a72; }
.toolbar { flex: none; height: 31px; display: flex; align-items: center; padding-bottom: 2px; border-bottom: 1px solid #a3a3a3; background: linear-gradient(#f4f4f4, #ececec); }
.toolbar button { flex: none; width: 23px; height: 24px; }
.toolbar .wide { width: 27px; }
.toolbar .drop { width: 33px; }
.toolbar svg { width: 20px; height: 20px; }
.toolbar .icon-wide { width: 28px; }
.sep { flex: none; width: 7px; height: 18px; background: linear-gradient(#b5b5b5, #b5b5b5) 4px 0 / 2px 2px no-repeat, linear-gradient(#b5b5b5, #b5b5b5) 4px 4px / 2px 2px no-repeat, linear-gradient(#b5b5b5, #b5b5b5) 4px 8px / 2px 2px no-repeat, linear-gradient(#b5b5b5, #b5b5b5) 4px 12px / 2px 2px no-repeat, linear-gradient(#b5b5b5, #b5b5b5) 4px 16px / 2px 2px no-repeat; }

.workspace { flex: 1; min-height: 0; display: grid; grid-template-columns: 275px minmax(0, 1fr); gap: 4px; padding: 4px 0 0; }
.side, .center { min-height: 0; display: flex; flex-direction: column; }
.side { gap: 4px; }
.panel { display: flex; flex-direction: column; border: 1px solid #85878c; min-height: 0; }
.explorer { flex: 1; }
.panel-head { flex: none; height: 20px; display: flex; align-items: stretch; border-bottom: 1px solid #999; background: linear-gradient(#e8e8e8, #c9c9c9); }
.panel-title { display: flex; align-items: center; gap: 8px; padding: 0 5px; border-right: 1px solid #999; background: #f3f3f3; font: bold 11px/19px "Liberation Sans", Arial, sans-serif; }
.props .panel-title { gap: 12px; padding-right: 6px; }
.x { width: 7px; height: 7px; }
.mini { margin: 0 5px 0 auto; }
.modes { flex: none; height: 28px; display: flex; align-items: center; border-bottom: 1px solid #7f8b98; }
.mode { height: 19px; padding: 0 2px; }
.mode.on { border: 1px solid #555; border-radius: 3px; background: linear-gradient(#c8c8c8, #e2e2e2); }
.tree-icon { margin-left: auto; }
.filter { margin-right: 2px; }

.scroller { flex: 1; min-height: 0; display: flex; }
.tree { flex: 1; min-width: 0; list-style: none; background: #fff; padding-top: 2px; overflow: hidden; }
.tree li { display: flex; height: 18px; }
.g { flex: none; width: 19px; height: 18px; }
.ic { width: 20px; height: 18px; margin-right: 4px; }
.tree span { padding: 1px 2px 0 1px; }
.selected { background: #dedede; }

.bar { flex: none; width: 16px; display: flex; flex-direction: column; background: #f1f1f1; border-left: 1px solid #e2e2e2; }
.arrow { width: 15px; height: 16px; }
.thumb { border: 1px solid #8b8b8b; border-radius: 2px; background: repeating-linear-gradient(#555 0 1px, transparent 1px 3px) 50% 50% / 7px 8px no-repeat, linear-gradient(90deg, #f8f8f8, #c8c8c8); }
.gap-tree { flex: 167; }
.thumb-tree { flex: 108; }
.gap-end { flex: 19; }
.gap-props { flex: 21; }
.thumb-props { flex: 29; }
.gap-end-props { flex: 9; }
.gap-log { flex: 1; }
.thumb-log { height: 6px; background: linear-gradient(#f8f8f8, #ccc); }

.progress { flex: none; height: 37px; margin: 0 1px 1px 0; padding: 3px 7px 0 3px; border: 1px solid #aaa; }
.track { height: 12px; padding: 4px 2px; border: 1px solid #888; border-radius: 2px; background: linear-gradient(#f0f0f0, #bdbdbd 60%, #e8e8e8); }
.track i { display: block; width: 14px; height: 4px; background: linear-gradient(#7ddc8c, #2ec94c); }
.progress p { padding-left: 2px; font: 11px/19px "Liberation Sans", Arial, sans-serif; }

.props { flex: none; height: 177px; font-family: "Liberation Sans", Arial, sans-serif; }
.grid { flex: 1; align-self: flex-start; border-collapse: collapse; table-layout: fixed; background: #fff; }
.grid th, .grid td { height: 18px; padding: 0 2px; border-bottom: 1px solid #d0d0d0; border-right: 1px solid #d0d0d0; text-align: left; font-weight: normal; line-height: 17px; }
.grid th { width: 128px; }
.grid td { padding-left: 1px; }
.grid .cell { display: flex; justify-content: space-between; padding-left: 3px; height: 17px; align-items: center; }
.grid .group th { background: #d4d4d4; }
.grid .group svg { display: inline-block; margin: 0 2px 0 0; }
.off { color: #777; }
.dots { width: 13px; height: 15px; border: 1px solid #777; border-radius: 3px; background: linear-gradient(#fafafa, #d5d5d5); }
.pick { display: flex; align-items: center; padding-right: 4px; height: 17px; }
.pick select { flex: 1; min-width: 0; appearance: none; border: 0; padding: 0; background: none; font: 11px/17px "DejaVu Sans Condensed", sans-serif; color: #1c1c1c; }
.about { flex: none; height: 62px; display: grid; grid-template-columns: 1fr auto; align-content: start; padding: 5px 6px 0 4px; row-gap: 1px; border-top: 1px solid #999; }
.about h2 { font-size: 11px; line-height: 20px; }
.about p { padding-left: 2px; }

.views { flex: 1; min-height: 0; display: flex; flex-direction: column; border: 1px solid #85878c; border-top: 0; }
.tabs { flex: none; height: 21px; display: flex; border-bottom: 1px solid #85878c; }
.tab { border: 1px solid #999; border-bottom: 0; border-left: 0; padding: 0 3px 0 6px; gap: 17px; background: linear-gradient(#ededed, #cfcfcf); }
.tab.active { border-color: #4a84a8; background: linear-gradient(#fff, #d4ecf8); }
.tab.plain { background: #f6f6f6; gap: 20px; padding-right: 4px; }
.tab-tools { margin-left: auto; display: flex; align-items: flex-start; }
.tab-tools button { border: 1px solid #999; width: 15px; height: 15px; background: linear-gradient(#fafafa, #d8d8d8); }
.tab-tools svg { width: 13px; height: 13px; }
.tab-tools .strong { margin-left: 4px; border-color: #555; border-radius: 2px; width: 16px; }
.canvas { flex: 1; min-height: 0; display: flex; padding: 1px 2px 1px 1px; background: #fff; }
.scene { flex: 1; width: 100%; height: 100%; }
.axis { font: 11px "DejaVu Sans", sans-serif; }
.legend { font: italic 12px "DejaVu Sans", sans-serif; text-anchor: middle; fill: #333; }
.legend-title { font: italic 13px "DejaVu Sans Condensed", sans-serif; text-anchor: middle; fill: #333; }

.output { flex: none; height: 98px; display: flex; flex-direction: column; margin-top: 2px; border: 1px solid #85878c; }
.out-tabs { height: 22px; padding-top: 2px; }
.log { flex: 1; min-width: 0; display: flex; align-items: flex-end; padding: 0 0 18px 102px; overflow: hidden; background: #fff; }
.log table { border-collapse: collapse; font: 12px/16px "Liberation Mono", monospace; color: #444; }
.log td { padding: 0; width: 105px; white-space: nowrap; }
.log td:first-child { width: 35px; }
.status { flex: none; height: 24px; }
```
